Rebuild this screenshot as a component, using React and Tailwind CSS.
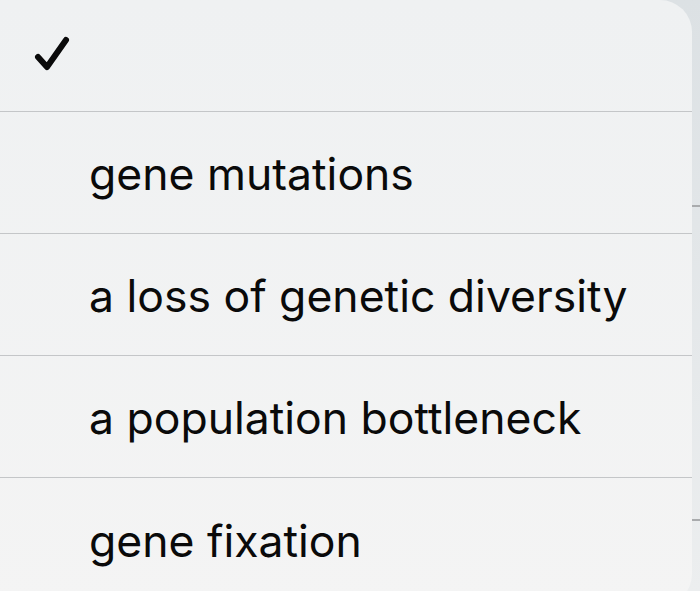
export default function App() {
  const items = ["gene mutations", "a loss of genetic diversity", "a population bottleneck", "gene fixation"];
  return (
    <div className="w-[700px] h-[591px] overflow-hidden flex bg-gradient-to-b from-[#dce1e4] to-[#eceeef]" style={{ fontFamily: "Inter, 'Noto Sans', sans-serif" }}>
      <div className="w-[692px] h-[606px] shrink-0 rounded-r-[32px] bg-gradient-to-b from-[#eff1f2] to-[#f4f4f4] flex flex-col">
        <div className="h-[112px] shrink-0 flex items-center pl-[33px] border-b border-[#c4c6c8]">
          <svg width="38" height="38" viewBox="0 0 38 38" fill="none" className="mt-[-2px]">
            <path d="M5 21 L14 31 L33 4" stroke="#0a0a0a" strokeWidth="6" strokeLinecap="round" strokeLinejoin="round" />
          </svg>
        </div>
        {items.map((t, i) => (
          <div key={t} className={`h-[122px] shrink-0 flex items-center pl-[89px] text-[44.5px] text-[#0a0a0a] tracking-normal ${i < items.length - 1 ? "border-b border-[#c4c6c8]" : ""}`}>
            <span className="mt-[4px]">{t}</span>
          </div>
        ))}
      </div>
      <div className="flex-1 flex flex-col">
        <div className="h-[205px] shrink-0" />
        <div className="h-[2px] bg-[#a9abad]" />
        <div className="h-[312px] shrink-0" />
        <div className="h-[2px] bg-[#a9abad]" />
      </div>
    </div>
  );
}
